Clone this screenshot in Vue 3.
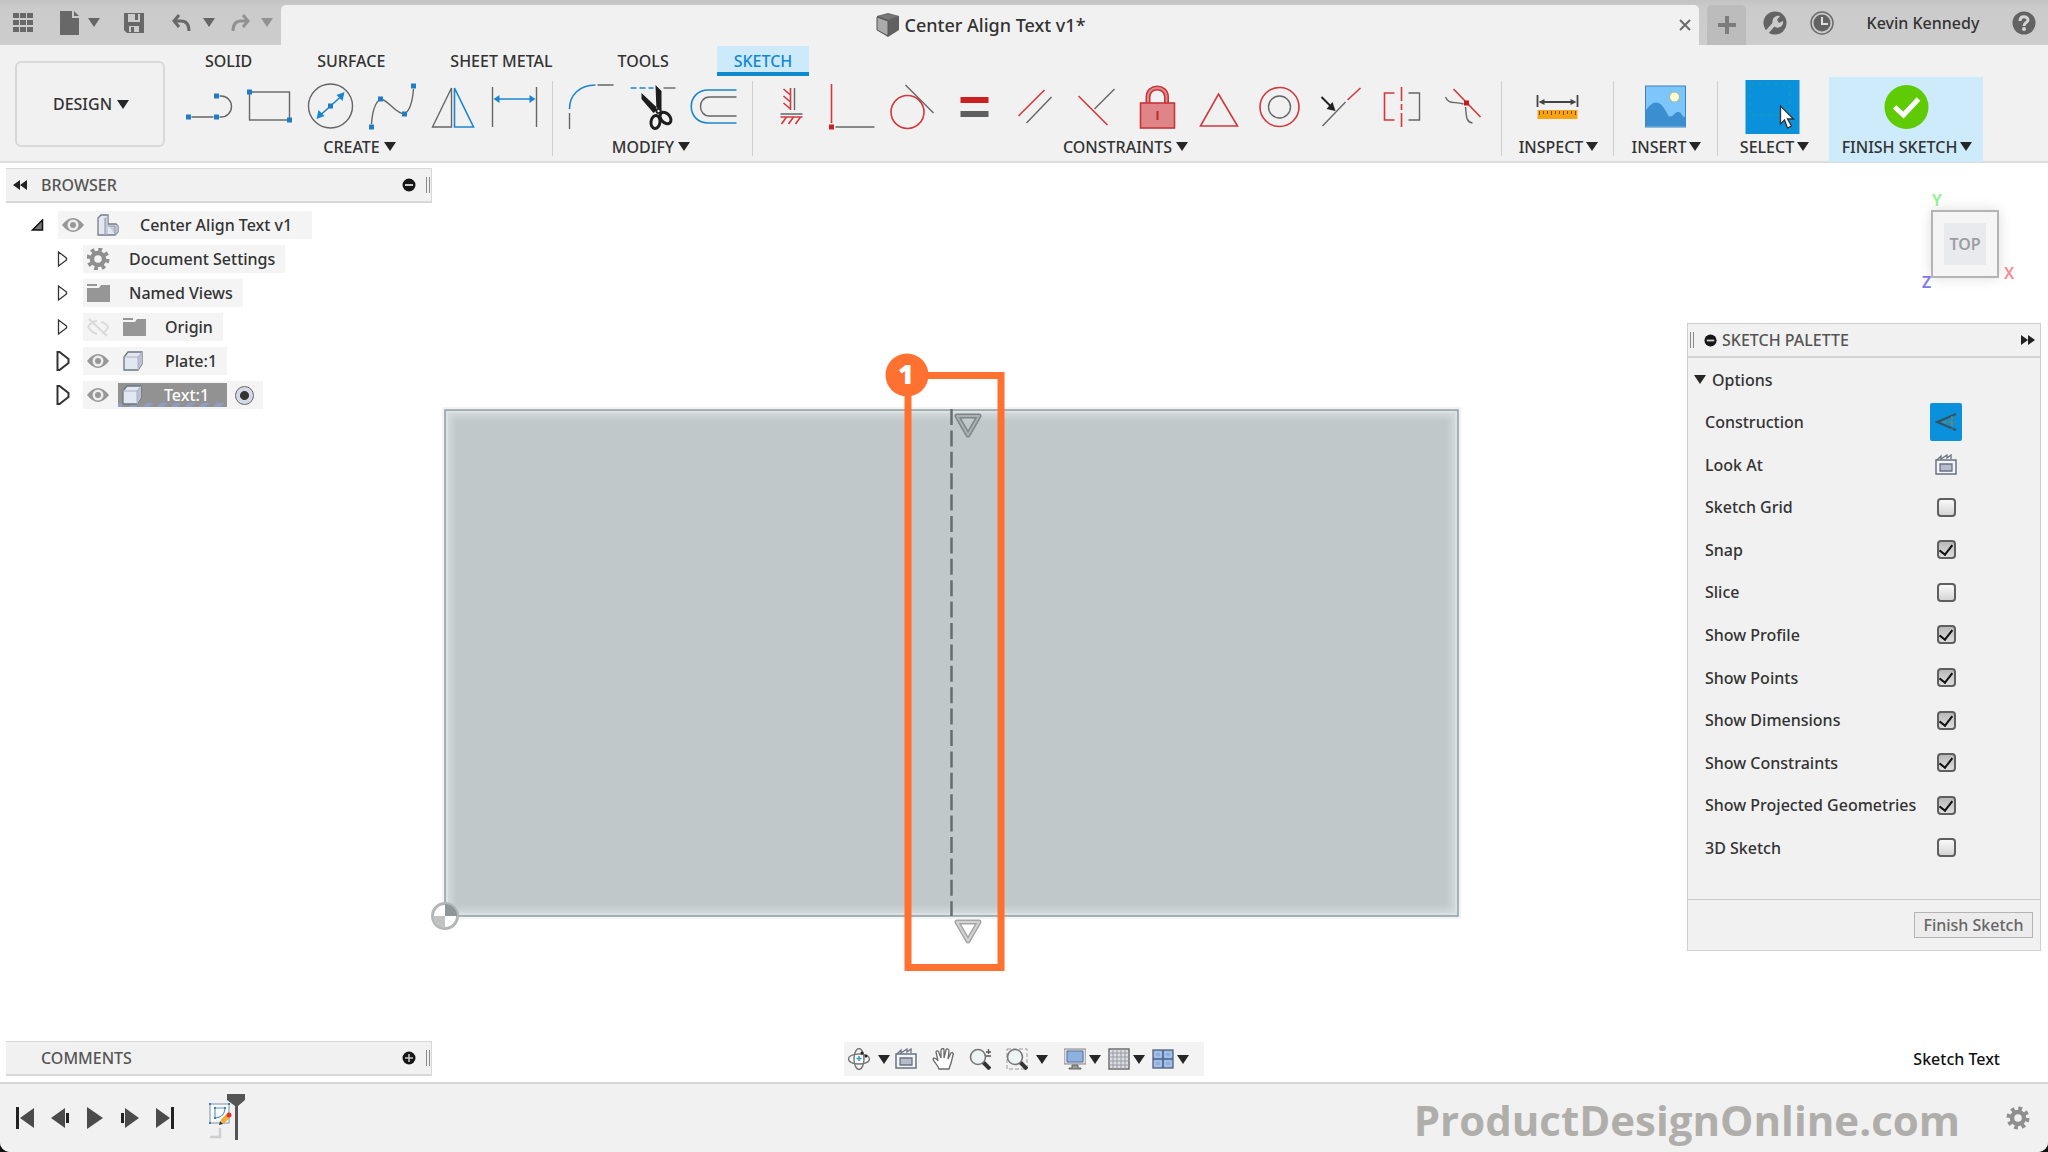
<script setup>
import { ref } from 'vue'

const g = 'fill="none" stroke="#666" stroke-width="1.4"'
const b = 'fill="none" stroke="#1a86d0" stroke-width="1.6"'
const r = 'fill="none" stroke="#d2383c" stroke-width="1.6"'
const dot = (x, y, c = '#1f7cc7') => `<rect x="${x - 2.5}" y="${y - 2.5}" width="5" height="5" fill="${c}"/>`

const create = [
  { name: 'Line', art: `<path ${g} d="M-17 11H5M11 11h1.5a10.5 10.5 0 0 0 0-21H11"/>${dot(-20, 11)}${dot(8, 11)}${dot(8, -10)}` },
  { name: 'Rectangle', art: `<rect ${g} x="-20" y="-14" width="40" height="28"/>${dot(-20, -14)}${dot(20, 14)}` },
  { name: 'Circle', art: `<circle ${g} r="22"/><path ${b} d="M-10 9L10-9"/><path fill="#1a86d0" d="M14-14l-2 9-6-6zM-14 13l2-9 6 6z"/>${dot(0, 0)}` },
  { name: 'Spline', art: `<path ${g} d="M-20 18C-19 4-16-4-11-7C-4-7 4 8 13 8C18 5 21-4 22-17"/>${dot(-20, 21)}${dot(-11, -7)}${dot(13, 8)}${dot(22, -20)}` },
  { name: 'Mirror', art: `<path ${g} d="M-1-18V21H-20z"/><path ${b} d="M2-18V21H21z"/>` },
  { name: 'Dimension', art: `<path ${g} d="M-21-19V21M23-19V21"/><path ${b} d="M-16-7H18"/><path fill="#1a86d0" d="M-20-7l6-4v8zM22-7l-6-4v8z"/>` },
]

const modify = [
  { name: 'Fillet', art: `<path ${b} d="M-22 3C-22-11-12-21 4-21"/><path ${g} d="M6-21H22M-22 7V23"/>` },
  { name: 'Trim', art: `<path ${b} stroke-dasharray="6 3" d="M-22-18H1"/><path ${g} d="M11-18H23"/><path fill="#1d1d1d" d="M3-21l6 6V6H4zM-11-13V-7L1 7 6 3z"/><g fill="none" stroke="#1d1d1d" stroke-width="3"><ellipse cx="3" cy="16" rx="4.5" ry="6.5" transform="rotate(8 3 16)"/><ellipse cx="13" cy="12" rx="4.5" ry="6.5" transform="rotate(-42 13 12)"/></g><circle cx="6" cy="5" r="3" fill="#1d1d1d"/><circle cx="6" cy="5" r="1.2" fill="#fff"/>` },
  { name: 'Offset', art: `<path ${b} d="M23-16H-5C-28-16-28 17-5 17H23"/><path ${g} d="M23-9H-4C-16-9-16 10-4 10H23"/>` },
]

const constraints = [
  { name: 'Horizontal/Vertical', art: `<path ${g} d="M3-18V4M-11 8H11"/><path ${r} d="M-1-18V4M-8-17l7 6M-8-10l7 6M-8-3l7 6M-11 11H11M-10 18l5-7M-3 18l5-7M4 18l5-7"/>` },
  { name: 'Coincident', art: `<path ${r} d="M-21-22V17"/><path ${g} d="M-17 21H22"/>${dot(-21, 21, '#c9232a')}` },
  { name: 'Tangent', art: `<path ${g} d="M-8-21L20 7"/><circle ${r} cx="-6" cy="6" r="16.5"/>` },
  { name: 'Equal', art: `<path fill="#cc1f21" d="M-14-9H14v6H-14z"/><path fill="#5f5f5f" d="M-14 5H14v6H-14z"/>` },
  { name: 'Parallel', art: `<path ${r} d="M-17 10L9-16"/><path ${g} d="M-9 17L16-9"/>` },
  { name: 'Perpendicular', art: `<path ${r} d="M-18-10L11 19"/><path ${g} d="M-2 3L18-17"/>` },
  { name: 'Fix', art: `<path fill="none" stroke="#c6353a" stroke-width="5" d="M-9.500-2V-9C-9.500-21 9-21 9-9V-2"/><path fill="none" stroke="#e08a8c" stroke-width="2" d="M-9.500-2V-9C-9.500-21 9-21 9-9V-2"/><rect x="-17" y="-3" width="34" height="25" fill="#e08587" stroke="#c6353a" stroke-width="1.600"/><path stroke="#c2272d" stroke-width="2" d="M0 5V14"/>` },
  { name: 'Midpoint', art: `<path ${r} d="M0-12L19 20H-18z"/>` },
  { name: 'Concentric', art: `<circle ${r} cy="1" r="19.500"/><circle ${g} cy="1" r="11"/>` },
  { name: 'Collinear', art: `<path ${g} d="M-18 20L5-4"/><path ${r} d="M7-6L20-18"/><path stroke="#222" stroke-width="2" d="M-19-9l9 9"/><path fill="#222" d="M-5 5l-9-2 6-7z"/>` },
  { name: 'Symmetry', art: `<path ${r} d="M-7-13H-17V14H-7M0-19V-5M0-2V4M0 7V21"/><path ${g} d="M7-13H18V14H7"/>` },
  { name: 'Curvature', art: `<path ${g} d="M-17-9C-14-1-8-5 1-2M3 1C4 9 3 16 10 17"/><path ${r} d="M-9-17L18 11"/>${dot(4, -3, '#d0161c')}` },
]

const inspect = [{ name: 'Measure', art: `<path fill="none" stroke="#444" stroke-width="1.800" d="M-20-11V1M20-11V1M-16-4H16"/><path fill="#444" d="M-19-4l6-3v6zM19-4l-6-3v6z"/><path fill="#f7a414" d="M-20 4H20V13H-20z"/><path stroke="#7a4b00" stroke-width="1" d="M-18 5v4M-14 5v3M-10 5v3M-6 5v4M-2 5v3M2 5v3M6 5v4M10 5v3M14 5v3M18 5v4"/>` }]
const insert = [{ name: 'Canvas', art: `<rect x="-20" y="-20" width="40" height="41" fill="#7cc6fc" stroke="#3c84ba"/><path fill="#3b8fd0" d="M-20 20V5C-12-7-5-7 3 10C8 12 9 5 13 6C16 6 17 12 20 11V20z"/><circle cx="9" cy="-9" r="5" fill="#fdfdd8" stroke="#a9b98a"/>` }]
const select = [{ name: 'Select', art: `<rect x="-28" y="-26" width="54" height="54" fill="#0b90dc"/><rect x="-24" y="-22" width="40" height="31" fill="none" stroke="#129cb4" stroke-width="1.500" stroke-dasharray="4 4"/><path fill="#fff" stroke="#333" stroke-width="1.300" d="M7 0V18l4-4 3 8 4-2-4-7h6z"/>` }]
const finish = [{ name: 'Finish sketch', art: '<circle cy="1" r="22" fill="#5ecb05"/><path fill="none" stroke="#fff" stroke-width="5" d="M-12 1L-3 9L12-7"/>' }]

const groups = [
  { label: 'CREATE', tools: create, cls: '' },
  { label: 'MODIFY', tools: modify, cls: '' },
  { label: 'CONSTRAINTS', tools: constraints, cls: '' },
  { label: 'INSPECT', tools: inspect, cls: 'single' },
  { label: 'INSERT', tools: insert, cls: 'single narrow' },
  { label: 'SELECT', tools: select, cls: 'single last' },
  { label: 'FINISH SKETCH', tools: finish, cls: 'finish' },
]

const tabs = ['SOLID', 'SURFACE', 'SHEET METAL', 'TOOLS', 'SKETCH']
const activeTab = ref('SKETCH')

const part = '<path d="M1 6l4-5h14v12l-4 6H1z" fill="#e3e7f1" stroke="#6f7580" stroke-width="1.300"/><path d="M15 19V6l4-5v12z" fill="#b9c1d3"/><path d="M1 6h14l4-5M15 6v13" fill="none" stroke="#aab0bd"/>'
const eye = '<path d="M0 10Q11-4 22 10Q11 24 0 10z" fill="#979797"/><circle cx="11" cy="10" r="5.500" fill="#eee"/><circle cx="11" cy="10" r="3" fill="#979797"/>'
const eyeOff = '<g fill="none" stroke="#dadada" stroke-width="2"><path d="M1 10Q5 4 10 4M1 10Q5 16 10 17M14 5Q19 6 21 10Q19 15 15 16M2 2L20 19"/></g>'
const folder = '<path fill="#969696" d="M0 1h10v2H0zM0 5h12l2-3h9v17H0z"/>'
const gear = '<g fill="none" stroke="#8f8f8f"><circle cx="11" cy="10" r="6" stroke-width="4.500"/><circle cx="11" cy="10" r="9.500" stroke-width="4" stroke-dasharray="3.730 3.730"/></g>'
const assembly = '<path d="M1 4l3-3h7v9h8l2 2v6l-3 3H1z" fill="#e3e7f1" stroke="#757b86" stroke-width="1.300"/><path d="M8 21V4l3-3v19zM12 12h6l3-2v8l-3 3z" fill="#b9c1d3" opacity=".7"/><path d="M8 4v16M11 12h7v8" stroke="#8d94a2" fill="none"/>'

const tree = [
  { text: 'Document Settings', icons: [gear] },
  { text: 'Named Views', icons: [folder] },
  { text: 'Origin', icons: [eyeOff, folder] },
  { text: 'Plate:1', icons: [eye, part], big: true },
]

const options = ref([
  { text: 'Sketch Grid', on: false },
  { text: 'Snap', on: true },
  { text: 'Slice', on: false },
  { text: 'Show Profile', on: true },
  { text: 'Show Points', on: true },
  { text: 'Show Dimensions', on: true },
  { text: 'Show Constraints', on: true },
  { text: 'Show Projected Geometries', on: true },
  { text: '3D Sketch', on: false },
])

const lookAt = '<path d="M1 6h20v14H1z" fill="#f4f5f8" stroke="#6b7282" stroke-width="1.500"/><path d="M5 10h12v7H5z" fill="#b7bdca" stroke="#6b7282" stroke-width="1.300"/><path d="M2 6l4-4v3l6-4v3l4-3v4" fill="none" stroke="#6b7282" stroke-width="1.300"/>'

const nav = [
  { name: 'Orbit', caret: true, art: '<g fill="#fafafa" stroke="#777" stroke-width="1.400"><ellipse cx="11" cy="11" rx="10.500" ry="5"/><ellipse cx="11" cy="11" rx="5" ry="10.500" fill="none"/></g><path stroke="#2aa0c8" stroke-width="1.500" d="M11 8v5M8.500 10.500h5"/><circle cx="14" cy="5" r="1.500" fill="#222"/><circle cx="18" cy="8" r="1.500" fill="#222"/>' },
  { name: 'Look at', art: lookAt, gap: true },
  { name: 'Pan', gap: true, art: '<path fill="#fff" stroke="#6a6a6a" stroke-width="1.300" d="M7 21C6 17 1 13 1 11C2 9 5 11 6 13L4 4C5 2 7 3 7 5L9 10L9 2C10 0 12 0 12 2L12 10L14 2C15 0 17 1 17 3L16 11L19 5C20 4 22 5 21 7C20 12 19 16 17 21z"/>' },
  { name: 'Zoom', gap: true, art: '<path stroke="#333" stroke-width="4" d="M14 14l7 7"/><circle cx="9" cy="9" r="7.500" fill="#eef4f4" stroke="#777" stroke-width="1.600"/><path stroke="#555" stroke-width="1.300" d="M17 4h5M19.500 1v5M17 8h5"/>' },
  { name: 'Zoom window', caret: true, wide: true, art: '<rect x="1" y="1" width="20" height="20" fill="none" stroke="#999" stroke-dasharray="4 2"/><path stroke="#333" stroke-width="4" d="M14 14l7 7"/><circle cx="9" cy="9" r="7.500" fill="#eef4f4" stroke="#777" stroke-width="1.600"/>' },
  { name: 'Display', caret: true, art: '<path fill="#ddd" stroke="#888" d="M0 1h22v15H0z"/><path fill="#8eb1e2" stroke="#54719e" d="M3 3h16v11H3z"/><path fill="#999" stroke="#666" d="M8 17h6v3h3v1H5v-1h3z"/>' },
  { name: 'Grid', caret: true, art: '<rect x="1" y="1" width="20" height="20" fill="#dcdce3" stroke="#666" stroke-width="1.400"/><path stroke="#9a9aa4" d="M5 1v20M9 1v20M13 1v20M17 1v20M1 5h20M1 9h20M1 13h20M1 17h20"/>' },
  { name: 'Viewports', caret: true, art: '<rect x="1" y="2" width="20" height="18" fill="#8fb0df" stroke="#5b6b85" stroke-width="1.400"/><path stroke="#4c6690" stroke-width="1.600" d="M11 2v18M1 11h20"/><path fill="none" stroke="#b9cdec" d="M3 4h6v5H3zM13 4h6v5h-6zM3 13h6v5H3zM13 13h6v5h-6z"/>' },
]

const playback = [
  { name: 'Go to start', art: '<path fill="#222" d="M0 0h3v22H0z"/><path fill="#4b4b4b" d="M18 1v20L4 11z"/>' },
  { name: 'Step back', art: '<path fill="#4b4b4b" d="M14 1v20L0 11z"/><path fill="#222" d="M15 6h3v10h-3z"/>' },
  { name: 'Play', art: '<path fill="#4b4b4b" d="M1 0v22l16-11z"/>' },
  { name: 'Step forward', art: '<path fill="#222" d="M0 6h3v10H0z"/><path fill="#4b4b4b" d="M4 1v20l14-10z"/>' },
  { name: 'Go to end', art: '<path fill="#4b4b4b" d="M0 1v20l14-10z"/><path fill="#222" d="M15 0h3v22h-3z"/>' },
]
</script>

<template>
  <div class="app">
    <header class="titlebar">
      <div class="quick">
        <button aria-label="Data panel"><svg width="22" height="22" viewBox="0 0 22 22"><path fill="#686868" d="M1 1h6v5H1zM8 1h6v5H8zM15 1h6v5h-6zM1 8h6v5H1zM8 8h6v5H8zM15 8h6v5h-6zM1 15h6v5H1zM8 15h6v5H8zM15 15h6v5h-6z" /></svg></button>
        <button class="file" aria-label="File"><svg width="20" height="24" viewBox="0 0 20 24"><path fill="#686868" d="M0 0h12v7h7v17H0zM14 0l5 5h-5z" /></svg><i class="caret" /></button>
        <button class="save" aria-label="Save"><svg width="22" height="22" viewBox="0 0 22 22"><path fill="#686868" fill-rule="evenodd" d="M1 1h20v20H4l-3-3zM5 2v8h12V2zM6 14v6h10v-6z" /><path fill="#686868" d="M12 2h3v6h-3zM8 15h3v5H8z" /></svg></button>
        <button class="undo" aria-label="Undo"><svg width="20" height="18" viewBox="0 0 20 18"><path fill="none" stroke="#686868" stroke-width="3" d="M7 1L2 7l5 6M2 7h7c6 0 8 4 8 10" /></svg><i class="caret" /></button>
        <button class="redo" aria-label="Redo"><svg width="20" height="18" viewBox="0 0 20 18"><path fill="none" stroke="#929292" stroke-width="3" d="M13 1l5 6-5 6M18 7h-7c-6 0-8 4-8 10" /></svg><i class="caret" /></button>
      </div>
      <div class="doc">
        <h1>
          <svg width="24" height="24" viewBox="0 0 24 24"><path fill="#616161" d="M1 3l11-3 11 3v14l-11 7L1 17z" /><path fill="#ababab" stroke="#555" d="M1 4l11 4v15L1 17z" /><path fill="#777" d="M2 3l10-2 10 2-10 4z" /></svg>
          <span>Center Align Text v1*</span>
        </h1>
        <button class="close" aria-label="Close"><svg width="12" height="12" viewBox="0 0 12 12"><path stroke="#6c6c6c" stroke-width="2" d="M1 1l10 10M11 1L1 11" /></svg></button>
      </div>
      <button class="newtab" aria-label="New design"><svg width="18" height="18" viewBox="0 0 18 18"><path stroke="#7c7c7c" stroke-width="4" d="M9 0v18M0 9h18" /></svg></button>
      <div class="account">
        <button aria-label="Extensions"><svg width="24" height="24" viewBox="0 0 24 24"><circle cx="12" cy="12" r="11.500" fill="#636363" /><path fill="none" stroke="#cbcbcb" stroke-width="4" d="M4 21l8-9" /><path fill="#cbcbcb" d="M10 13c-2-5 2-9 7-8l-3 4 2 3 4-2c1 5-4 8-8 6z" /></svg></button>
        <button aria-label="Job status"><svg width="24" height="24" viewBox="0 0 24 24"><circle cx="12" cy="12" r="11" fill="none" stroke="#6c6c6c" stroke-width="1.500" /><circle cx="12" cy="12" r="8.500" fill="#636363" /><path fill="none" stroke="#ddd" stroke-width="2" d="M12 6v7h6" /></svg></button>
        <span class="user">Kevin Kennedy</span>
        <button class="help" aria-label="Help"><svg width="24" height="24" viewBox="0 0 24 24"><circle cx="12" cy="12" r="11.500" fill="#636363" /><path fill="none" stroke="#d6d6d6" stroke-width="3" d="M8 10c0-6 8-5 8-1 0 3-4 2-4 6" /><circle cx="12" cy="18" r="2" fill="#d6d6d6" /></svg></button>
      </div>
    </header>

    <div class="toolbar">
      <button class="design">DESIGN <i class="caret" /></button>
      <div class="ribbon">
        <nav class="tabs">
          <button v-for="t in tabs" :key="t" :class="{ active: t === activeTab }" @click="activeTab = t">{{ t }}</button>
        </nav>
        <div class="groups">
          <section v-for="grp in groups" :key="grp.label" class="group" :class="grp.cls">
            <div class="tools">
              <button v-for="tool in grp.tools" :key="tool.name" :aria-label="tool.name">
                <svg width="61" height="54" viewBox="-30.5 -26 61 54" v-html="tool.art" />
              </button>
            </div>
            <button class="label">{{ grp.label }} <i class="caret" /></button>
          </section>
        </div>
      </div>
    </div>

    <main class="workspace">
      <svg class="model" viewBox="0 163 2048 919" role="img" aria-label="Plate sketch">
        <defs><filter id="soft" x="-5%" y="-5%" width="110%" height="110%"><feGaussianBlur stdDeviation="3" /></filter></defs>
        <rect x="445" y="410" width="1013" height="506" fill="#d3dadb" />
        <rect x="452" y="417" width="999" height="492" fill="#c0c8c9" filter="url(#soft)" />
        <rect x="445" y="410" width="1013" height="506" fill="none" stroke="#e3e9ec" stroke-width="6" opacity=".5" />
        <rect x="445" y="410" width="1013" height="506" fill="none" stroke="#8e9da2" stroke-width="1.500" />
        <path d="M951.500 409V916" stroke="#666d6f" stroke-width="2.500" stroke-dasharray="16 5.400" />
        <g fill="none" stroke-linejoin="round">
          <path v-for="y in [416, 922]" :key="y" :d="`M957 ${y}h22l-11 19z`" :stroke="y > 900 ? '#a6a6a6' : '#7d8587'" stroke-width="5" />
          <path v-for="y in [416, 922]" :key="-y" :d="`M957 ${y}h22l-11 19z`" :stroke="y > 900 ? '#d2d2d2' : '#a9b1b3'" stroke-width="2" />
        </g>
        <circle cx="445" cy="916" r="12.500" fill="#fff" stroke="#b3b6b8" stroke-width="3" />
        <path fill="#8d9699" d="M445 916V904a12 12 0 0 1 12 12z" />
        <path fill="#c2c2c2" d="M445 916V928a12 12 0 0 1-12-12z" />
        <rect x="908" y="375.500" width="93" height="592" fill="none" stroke="#ff7130" stroke-width="7" />
        <circle cx="907" cy="375" r="21.500" fill="#ff7130" />
        <text x="906" y="384" text-anchor="middle" class="pin">1</text>
      </svg>

      <div class="left">
        <section class="browser">
          <header class="bar">
            <svg width="15" height="10" viewBox="0 0 15 10"><path fill="#222" d="M0 5l7-5v10zM7 5l7-5v10z" /></svg>
            <h2>BROWSER</h2>
            <button aria-label="Collapse browser"><svg width="14" height="14" viewBox="0 0 14 14"><circle cx="7" cy="7" r="6.500" fill="#161616" /><path stroke="#ccc" stroke-width="2" d="M3 7h8" /></svg></button>
            <i class="grip" />
          </header>
          <ul class="tree">
            <li class="root">
              <svg class="twist" width="12" height="12" viewBox="0 0 12 12"><path fill="#777" stroke="#111" stroke-width="1.500" d="M1 11h10V1z" /></svg>
              <span class="node"><svg width="22" height="22" viewBox="0 -1 22 22" v-html="eye" /><svg width="22" height="22" viewBox="0 0 22 22" v-html="assembly" /><span class="name">Center Align Text v1</span></span>
            </li>
            <li v-for="n in tree" :key="n.text">
              <svg class="twist" width="14" height="20" viewBox="0 0 14 20"><path :d="n.big ? 'M1 1v18h2l9-7v-4l-9-7z' : 'M2 3v14l8-6v-2z'" fill="#fff" stroke="#333" :stroke-width="n.big ? 2 : 1.3" /></svg>
              <span class="node"><svg v-for="(art, i) in n.icons" :key="i" width="23" height="22" viewBox="0 -1 23 22" v-html="art" /><span class="name">{{ n.text }}</span></span>
            </li>
            <li>
              <svg class="twist" width="14" height="20" viewBox="0 0 14 20"><path d="M1 1v18h2l9-7v-4l-9-7z" fill="#fff" stroke="#333" stroke-width="2" /></svg>
              <span class="node current"><svg width="23" height="22" viewBox="0 -1 23 22" v-html="eye" /><span class="picked"><svg width="23" height="22" viewBox="0 -1 23 22" v-html="part" /><span class="name">Text:1</span></span><input type="radio" checked aria-label="Activate Text:1"></span>
            </li>
          </ul>
        </section>
        <section class="bar comments">
          <h2>COMMENTS</h2>
          <button aria-label="Expand comments"><svg width="14" height="14" viewBox="0 0 14 14"><circle cx="7" cy="7" r="6.500" fill="#161616" /><path stroke="#ccc" stroke-width="1.500" d="M3 7h8M7 3v8" /></svg></button>
          <i class="grip" />
        </section>
      </div>

      <nav class="navbar">
        <button v-for="n in nav" :key="n.name" :aria-label="n.name" :class="{ gap: n.gap, wide: n.wide }"><svg width="22" height="22" viewBox="0 0 22 22" v-html="n.art" /><i v-if="n.caret" class="caret" /></button>
      </nav>

      <div class="right">
        <div class="cube">
          <button class="face"><span>TOP</span></button>
          <b class="axis y">Y</b><b class="axis x">X</b><b class="axis z">Z</b>
        </div>
        <section class="palette">
          <header>
            <i class="grip" />
            <svg width="13" height="13" viewBox="0 0 14 14"><circle cx="7" cy="7" r="6.500" fill="#161616" /><path stroke="#ccc" stroke-width="2" d="M3 7h8" /></svg>
            <h2>SKETCH PALETTE</h2>
            <svg width="15" height="10" viewBox="0 0 15 10"><path fill="#222" d="M0 0l7 5-7 5zM7 0l7 5-7 5z" /></svg>
          </header>
          <h3><i class="caret" />Options</h3>
          <div class="rows">
            <div class="row"><span>Construction</span><button class="construct" aria-label="Construction"><svg width="22" height="20" viewBox="0 0 22 20"><path fill="none" stroke="#33515f" stroke-width="2" d="M21 2L2 10l19 8" /><path stroke="#8d7f45" stroke-width="1.500" stroke-dasharray="4 2" d="M8 10h13M17 4v13" /></svg></button></div>
            <div class="row"><span>Look At</span><button aria-label="Look At"><svg width="22" height="22" viewBox="0 0 22 22" v-html="lookAt" /></button></div>
            <label v-for="o in options" :key="o.text" class="row"><span>{{ o.text }}</span><input v-model="o.on" type="checkbox"></label>
          </div>
          <footer><button>Finish Sketch</button></footer>
        </section>
        <p class="status">Sketch Text</p>
      </div>
    </main>

    <footer class="timeline">
      <div class="playback">
        <button v-for="p in playback" :key="p.name" :aria-label="p.name"><svg width="18" height="22" viewBox="0 0 18 22" v-html="p.art" /></button>
      </div>
      <svg class="feature" width="40" height="48" viewBox="0 0 40 48">
        <rect x="2" y="10" width="19" height="19" fill="#fafafa" stroke="#8fa3b3" stroke-width="1.200" />
        <path fill="none" stroke="#5f9cbd" stroke-width="1.200" d="M7 14h10q0 9-10 10z" />
        <path fill="#3f7fb3" d="M1 9h2v2H1zM20 9h2v2h-2zM1 28h2v2H1zM6 13h2v2H6zM16 13h2v2h-2zM6 23h2v2H6z" />
        <path stroke="#f2ac33" stroke-width="5" d="M14 28l6-6" /><circle cx="21" cy="21" r="2.500" fill="#d8382a" /><path fill="#333" d="M11 31l1-4 3 3z" />
        <path fill="none" stroke="#cfcfcf" stroke-width="2.500" d="M2 43h10v-9" />
        <path fill="#555" d="M19 0h18v6l-7 6v34h-3V12l-8-6z" />
      </svg>
      <span class="brand">ProductDesignOnline.com</span>
      <button class="prefs" aria-label="Timeline settings"><svg width="24" height="24" viewBox="-1 -2 24 24" v-html="gear" /></button>
    </footer>
  </div>
</template>

<style>
body { margin: 0; background: #111; }
</style>

<style scoped>
.app { display: flex; flex-direction: column; min-height: 100vh; background: #fff; color: #333; font: 500 16px/24px "Noto Sans", sans-serif; border-radius: 0 0 10px 10px; overflow: hidden; }
* { box-sizing: border-box; }
button { display: inline-flex; align-items: center; justify-content: center; padding: 0; border: 0; background: none; color: inherit; font: inherit; white-space: nowrap; }
svg { display: block; flex: none; }
h1, h2, h3, p, ul { margin: 0; padding: 0; font: inherit; list-style: none; }
.caret { flex: none; border: 6px solid transparent; border-top: 9px solid #262626; border-bottom: 0; }

.titlebar { display: flex; height: 45px; background: linear-gradient(#c3c3c3, #cbcbcb 8px, #cdcdcd); }
.quick { display: flex; width: 281px; padding-left: 12px; }
.quick .caret { border-top-color: #666; margin-left: 8px; }
.file { margin-left: 26px; }
.save { margin-left: 23px; }
.undo { margin-left: 27px; }
.quick .undo .caret, .quick .redo .caret { margin-left: 11px; }
.redo { margin-left: 15px; }
.quick .redo .caret { border-top-color: #929292; }
.doc { flex: 1; display: flex; align-items: center; margin-top: 5px; background: #f1f1f1; border-radius: 5px 5px 0 0; }
.doc h1 { flex: 1; display: flex; align-items: center; justify-content: center; gap: 4px; padding-left: 10px; font-size: 18px; }
.close { width: 28px; }
.newtab { width: 39px; margin: 5px 0 0 8px; background: #bcbcbc; border-radius: 5px 5px 0 0; }
.account { display: flex; align-items: center; gap: 23px; width: 302px; padding-left: 17px; }
.user { flex: 1; text-align: center; }
.help { margin-right: 12px; }

.toolbar { display: flex; height: 118px; background: #f1f1f1; border-bottom: 2px solid #dcdcdc; }
.design { width: 150px; height: 86px; margin: 16px 5px 0 15px; gap: 5px; padding-left: 2px; border: 2px solid #d8d8d8; border-radius: 6px; }
.tabs { display: flex; gap: 31px; margin: 1px 0 0 18px; height: 30px; }
.tabs button { padding: 0 17px; }
.tabs .active { color: #1189d2; background: #cdeafa; border-bottom: 4px solid #1189cd; padding-top: 4px; }
.groups { display: flex; height: 85px; margin-top: 1px; }
.group { display: flex; flex-direction: column; align-items: center; padding: 3px 8px 0; border-right: 1px solid; border-image: linear-gradient(transparent 5px, #cfcfcf 5px, #cfcfcf 78px, transparent 78px) 1; }
.tools { display: flex; }
.label { gap: 4px; height: 25px; padding-right: 3px; }
.single .label, .finish .label { gap: 3px; padding: 0 0 0 2px; }
.single { width: 112px; }
.narrow { width: 104px; }
.last { width: 111px; border: 0; }
.finish { width: 154px; border: 0; background: #cdebfa; }

.workspace { position: relative; flex: 1; display: grid; grid-template-columns: 1fr auto 1fr; }
.model { position: absolute; inset: 0; width: 100%; height: 100%; }
.pin { font: 800 27px "Open Sans", sans-serif; fill: #fff; }
.left, .navbar, .right { position: relative; }
.left { display: flex; flex-direction: column; justify-content: space-between; width: 426px; margin: 5px 0 6px 6px; }
.bar { display: flex; align-items: center; height: 35px; padding: 0 1px 0 7px; background: #f1f1f1; border: 1px solid #d8d8d8; border-width: 1px 1px 2px 0; color: #555; }
.bar h2 { flex: 1; margin-left: 13px; }
.bar.comments h2 { margin-left: 28px; }
.grip { width: 4px; height: 16px; margin-left: 10px; border: 1px solid #888; border-width: 0 1px; }
.tree { display: flex; flex-direction: column; gap: 6px; margin-top: 8px; }
.tree li { display: flex; align-items: center; height: 28px; padding-left: 50px; }
.tree .root { padding-left: 24px; }
.twist { width: 15px; margin-right: 12px; }
.root .twist { margin-right: 13px; }
.node { display: flex; align-items: center; gap: 13px; height: 28px; padding: 0 10px 0 4px; background: #f4f4f4; }
.root .node { padding-right: 20px; }
.node .name { margin-left: 6px; }
.root .node .name { margin-left: 8px; }
.picked { display: flex; align-items: center; gap: 13px; height: 24px; padding: 0 18px 0 4px; color: #fff; background: repeating-linear-gradient(135deg, #8f9dc0 0 5px, #929292 5px 10px) bottom / 100% 4px no-repeat #929292; }
.node.current { padding-right: 9px; gap: 8px; }
input { appearance: none; margin: 0; flex: none; }
input[type=radio] { width: 19px; height: 19px; border: 1px solid #666; border-radius: 50%; background: radial-gradient(#333 0 4px, #d5d9e6 5px); }

.navbar { align-self: end; display: flex; align-items: center; width: 360px; height: 34px; margin-bottom: 6px; padding-left: 4px; background: #f3f3f3; }
.navbar .caret { border-width: 9px 6px 0; margin-left: 3px; }
.navbar .gap { margin-right: 15px; }
.navbar button:first-child { margin-right: 5px; }
.navbar button:first-child .caret, .navbar .wide .caret { margin-left: 8px; }
.navbar .wide { margin-right: 16px; }
.navbar button:nth-last-child(-n+3) { margin-right: 7px; }

.right { justify-self: end; display: flex; flex-direction: column; width: 361px; padding-right: 7px; }
.cube { position: relative; width: 68px; height: 68px; margin: 47px 42px 45px auto; }
.face { width: 68px; height: 68px; background: #f5f5f5; border: 2px solid #b4b4b4; box-shadow: 0 0 12px #ddd; color: #9b9ea2; font-weight: 600; }
.face span { display: grid; place-items: center; width: 42px; height: 42px; background: #e9eaee; }
.axis { position: absolute; font-weight: 600; line-height: 20px; }
.y { left: 1px; top: -20px; color: #8df08d; }
.x { left: 73px; top: 53px; color: #f78b90; }
.z { left: -9px; top: 62px; color: #8078ee; }
.palette { background: #f1f1f1; border: 1px solid #cfcfcf; }
.palette header { display: flex; align-items: center; height: 34px; padding-right: 4px; border-bottom: 2px solid #d4d4d4; color: #555; }
.palette header .grip { margin: 0 10px 0 2px; }
.palette h2 { flex: 1; margin-left: 5px; }
.palette h3 { display: flex; align-items: center; gap: 6px; height: 43px; padding-left: 6px; }
.rows { display: grid; grid-auto-rows: 1fr; height: 468px; margin-bottom: 30px; }
.row { display: grid; grid-template-columns: 225px 32px; align-items: center; justify-items: center; padding-left: 17px; }
.row span { justify-self: start; white-space: nowrap; }
.construct { width: 32px; height: 38px; background: #0b90dc; border-radius: 2px; }
input[type=checkbox] { width: 19px; height: 19px; border: 2px solid #5f5f5f; border-radius: 4px; background: linear-gradient(#fafafa, #d4d4d4); display: grid; place-items: center; }
input[type=checkbox]:checked { background: linear-gradient(#b9b9b9, #ddd); }
input[type=checkbox]:checked::before { content: ""; width: 6px; height: 11px; margin-bottom: 3px; border: solid #111; border-width: 0 2px 2px 0; transform: rotate(38deg); }
.palette footer { display: flex; justify-content: flex-end; height: 51px; padding: 12px 7px 0 0; border-top: 1px solid #c9c9c9; }
.palette footer button { width: 119px; height: 26px; border: 1px solid #b4b4b4; background: #ececec; color: #666; }
.status { margin: auto 41px 11px auto; color: #111; }

.timeline { display: flex; align-items: center; height: 70px; background: #f1f1f1; border-top: 2px solid #d6d6d6; padding: 0 18px 0 16px; }
.playback { display: flex; gap: 17px; }
.feature { margin-left: 34px; }
.brand { margin-left: auto; padding-top: 4px; font: 700 42px/48px "Open Sans", sans-serif; color: #b0aeaa; }
.prefs { margin-left: 46px; }
</style>
